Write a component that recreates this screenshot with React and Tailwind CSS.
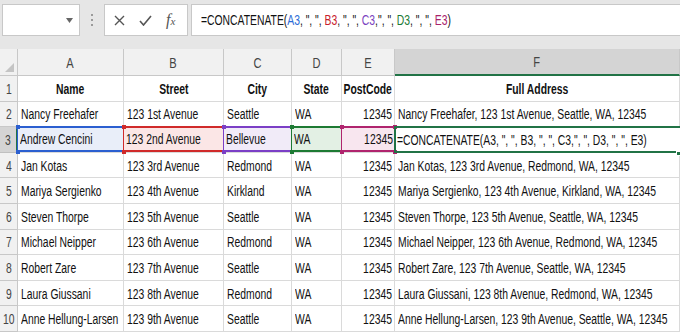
import React from 'react';

const widths = ['w-[106px]', 'w-[100px]', 'w-[68px]', 'w-[50px]', 'w-[53px]', 'w-[285px]'];
const letters = ['A', 'B', 'C', 'D', 'E', 'F'];

const people = [
  ['Nancy Freehafer', '123 1st Avenue', 'Seattle'],
  ['Andrew Cencini', '123 2nd Avenue', 'Bellevue'],
  ['Jan Kotas', '123 3rd Avenue', 'Redmond'],
  ['Mariya Sergienko', '123 4th Avenue', 'Kirkland'],
  ['Steven Thorpe', '123 5th Avenue', 'Seattle'],
  ['Michael Neipper', '123 6th Avenue', 'Redmond'],
  ['Robert Zare', '123 7th Avenue', 'Seattle'],
  ['Laura Giussani', '123 8th Avenue', 'Redmond'],
  ['Anne Hellung-Larsen', '123 9th Avenue', 'Seattle'],
];

// reference highlight per column in row 3
const refs = [
  { border: 'border-[#2b5fd0]', bg: 'bg-[#e9eef9]', handle: 'bg-[#2b5fd0]' },
  { border: 'border-[#d02a2a]', bg: 'bg-[#fbe6e6]', handle: 'bg-[#d02a2a]' },
  { border: 'border-[#7b3fc6]', bg: 'bg-[#f1ebf8]', handle: 'bg-[#7b3fc6]' },
  { border: 'border-[#1d7a33]', bg: 'bg-[#e3f0e4]', handle: 'bg-[#1d7a33]' },
  { border: 'border-[#b0246e]', bg: 'bg-[#f8e6ef]', handle: 'bg-[#b0246e]' },
];

const FORMULA = '=CONCATENATE(A3, ", ", B3, ", ", C3,", ", D3, ", ", E3)';

// Calibri-like narrow text: no narrow face installed, so squeeze Liberation Sans
const T = ({ children, align = 'left' }) => (
  <span
    className={`inline-block shrink-0 whitespace-nowrap scale-x-[0.74] ${
      align === 'right' ? 'origin-right' : align === 'center' ? 'origin-center' : 'origin-left'
    }`}
  >
    {children}
  </span>
);

const Handles = ({ color }) => (
  <>
    <span className={`absolute -left-[2px] -top-[2px] w-[4px] h-[4px] ${color}`} />
    <span className={`absolute -right-[2px] -top-[2px] w-[4px] h-[4px] ${color}`} />
    <span className={`absolute -left-[2px] -bottom-[2px] w-[4px] h-[4px] ${color}`} />
    <span className={`absolute -right-[2px] -bottom-[2px] w-[4px] h-[4px] ${color}`} />
  </>
);

const Cell = ({ i, children, right, bold, center }) => (
  <div
    className={`${widths[i]} shrink-0 h-full border-r border-b border-[#dadada] flex items-center px-[3px] pt-[1px] overflow-hidden ${
      right ? 'justify-end pr-[2px]' : center ? 'justify-center' : ''
    } ${bold ? 'font-bold' : ''}`}
  >
    <T align={right ? 'right' : center ? 'center' : 'left'}>{children}</T>
  </div>
);

const RefCell = ({ i, children, right }) => {
  const r = refs[i];
  return (
    <div className={`${widths[i]} shrink-0 h-full relative border-b border-[#dadada]`}>
      <div
        className={`absolute -left-[1px] -top-[1px] right-0 bottom-0 border-y-2 border-x ${r.border} ${r.bg} flex items-center px-[2px] pt-[1px] overflow-hidden ${
          right ? 'justify-end pr-[1px]' : ''
        }`}
      >
        <T align={right ? 'right' : 'left'}>{children}</T>
      </div>
      <Handles color={r.handle} />
    </div>
  );
};

const RowHead = ({ n, active }) => (
  <div
    className={`w-[18px] shrink-0 h-full flex items-center justify-center pt-[1px] text-[#444] border-b ${
      active ? 'bg-[#d4d4d4] border-r-2 border-r-[#217346] border-b-[#c0c0c0]' : 'bg-[#f1f1f1] border-r border-[#c8c8c8]'
    }`}
  >
    <T align="center">{n}</T>
  </div>
);

export default function App() {
  return (
    <div className="w-[680px] h-[332px] overflow-hidden bg-white text-[14px] text-[#111] font-['Liberation_Sans',Arial,sans-serif] leading-none">
      {/* formula bar */}
      <div className="h-[49px] bg-[#e6e6e6] flex items-start pt-[4px]">
        <div className="ml-[2px] w-[78px] h-[32px] bg-white border border-[#c8c8c8] flex items-center justify-end pr-[6px]">
          <svg width="7" height="5" viewBox="0 0 7 5">
            <path d="M0 0h7L3.5 5z" fill="#666" />
          </svg>
        </div>
        <div className="w-[24px] h-[32px] flex flex-col items-center justify-center gap-[3px]">
          <span className="w-[2px] h-[2px] bg-[#9a9a9a]" />
          <span className="w-[2px] h-[2px] bg-[#9a9a9a]" />
          <span className="w-[2px] h-[2px] bg-[#9a9a9a]" />
        </div>
        <div className="w-[84px] h-[32px] bg-white border border-[#c8c8c8] flex items-center pl-[9px] gap-[14px] text-[#555]">
          <svg width="11" height="11" viewBox="0 0 11 11">
            <path d="M1 1l9 9M10 1l-9 9" stroke="#555" strokeWidth="1.4" />
          </svg>
          <svg width="13" height="11" viewBox="0 0 13 11">
            <path d="M1 6l3.5 4L12 1" stroke="#555" strokeWidth="1.6" fill="none" />
          </svg>
          <span className="font-['Liberation_Serif',serif] italic text-[16px] leading-none">
            f<span className="text-[11px]">x</span>
          </span>
        </div>
        <div className="ml-[3px] flex-1 h-[32px] bg-white border border-r-0 border-[#c8c8c8] flex items-center pl-[9px] overflow-hidden text-[#111]">
          <T>
            <span>=CONCATENATE(</span>
            <span className="text-[#2b6bd6]">A3</span>
            <span>, ", ", </span>
            <span className="text-[#c8202a]">B3</span>
            <span>, ", ", </span>
            <span className="text-[#7b3fc0]">C3</span>
            <span>,", ", </span>
            <span className="text-[#1b7a35]">D3</span>
            <span>, ", ", </span>
            <span className="text-[#a8226a]">E3</span>
            <span>)</span>
          </T>
        </div>
      </div>

      {/* column headers */}
      <div className="h-[27px] flex text-[15px] text-[#444]">
        <div className="w-[18px] shrink-0 h-full bg-[#f1f1f1] border-r border-b border-[#c8c8c8] flex items-end justify-end p-[3px]">
          <svg width="9" height="9" viewBox="0 0 9 9">
            <path d="M9 0V9H0z" fill="#c4c4c4" />
          </svg>
        </div>
        {letters.map((l, i) => (
          <div
            key={l}
            className={`${widths[i]} shrink-0 h-full flex items-center justify-center border-r ${
              i === 5
                ? 'bg-[#d4d4d4] border-b-2 border-b-[#217346] border-r-[#c8c8c8]'
                : 'bg-[#f1f1f1] border-b border-[#c8c8c8]'
            }`}
          >
            <T align="center">{l}</T>
          </div>
        ))}
      </div>

      {/* row 1 */}
      <div className="h-[25.6px] flex">
        <RowHead n={1} />
        <Cell i={0} bold center>Name</Cell>
        <Cell i={1} bold center>Street</Cell>
        <Cell i={2} bold center>City</Cell>
        <Cell i={3} bold center>State</Cell>
        <Cell i={4} bold center>PostCode</Cell>
        <Cell i={5} bold center>Full Address</Cell>
      </div>

      {people.map(([name, street, city], idx) => {
        const n = idx + 2;
        if (n === 3) {
          return (
            <div key={n} className="h-[25.6px] flex">
              <RowHead n={n} active />
              <RefCell i={0}>{name}</RefCell>
              <RefCell i={1}>{street}</RefCell>
              <RefCell i={2}>{city}</RefCell>
              <RefCell i={3}>WA</RefCell>
              <RefCell i={4} right>12345</RefCell>
              <div className="w-[285px] shrink-0 h-full relative">
                <div className="absolute -left-[1px] -top-[1px] right-0 bottom-0 border-2 border-r-0 border-[#217346] flex items-center px-[1px] pt-[1px] overflow-hidden">
                  <T>{FORMULA}</T>
                </div>
                <span className="absolute -right-[1px] -bottom-[3px] w-[5px] h-[5px] bg-[#217346] border border-white" />
              </div>
            </div>
          );
        }
        return (
          <div key={n} className="h-[25.6px] flex">
            <RowHead n={n} />
            <Cell i={0}>{name}</Cell>
            <Cell i={1}>{street}</Cell>
            <Cell i={2}>{city}</Cell>
            <Cell i={3}>WA</Cell>
            <Cell i={4} right>12345</Cell>
            <Cell i={5}>{`${name}, ${street}, ${city}, WA, 12345`}</Cell>
          </div>
        );
      })}
    </div>
  );
}
